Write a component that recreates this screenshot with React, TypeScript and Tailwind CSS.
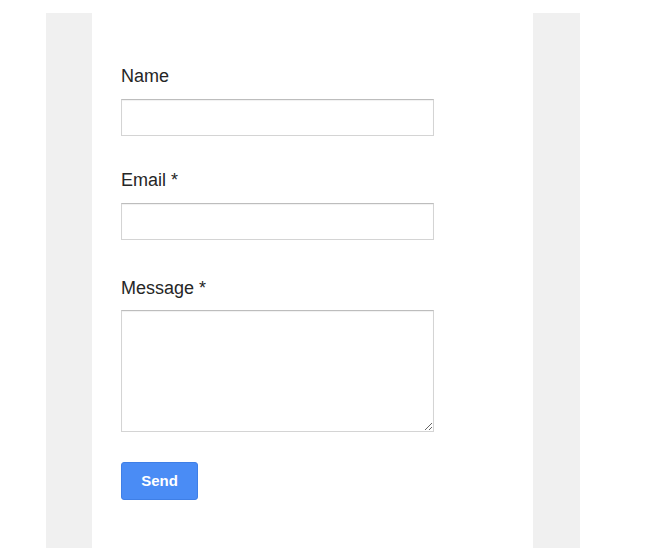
import React from "react";

const fieldClass =
  "block w-[313px] border border-[#d4d4d4] border-t-[#bdbdbd] bg-white shadow-[inset_0_1px_1px_rgba(0,0,0,0.06)] outline-none px-2 text-[14px]";

const labelClass = "block text-[18px] leading-[20px] text-[#262626]";

const App: React.FC = () => {
  return (
    <div
      className="h-[551px] w-[651px] bg-white pt-[13px] pl-[46px]"
      style={{ fontFamily: '"Liberation Sans", Arial, sans-serif' }}
    >
      <div className="h-[535px] w-[534px] bg-[#f0f0f0] pl-[46px]">
        <div className="h-full w-[441px] bg-white pl-[29px] pt-[53px]">
          <form onSubmit={(e) => e.preventDefault()}>
            <label className={labelClass}>Name</label>
            <input type="text" className={`${fieldClass} mt-[13px] h-[37px]`} />

            <label className={`${labelClass} mt-[34px]`}>Email *</label>
            <input type="email" className={`${fieldClass} mt-[13px] h-[37px]`} />

            <label className={`${labelClass} mt-[38px]`}>Message *</label>
            <textarea className={`${fieldClass} mt-[12px] h-[122px] resize`} />

            <button
              type="submit"
              className="mt-[30px] flex h-[38px] w-[77px] items-center justify-center rounded-[3px] border border-[#3f7fe6] bg-[#4a8cf5] text-[15px] font-bold text-white"
            >
              Send
            </button>
          </form>
        </div>
      </div>
    </div>
  );
};

export default App;
